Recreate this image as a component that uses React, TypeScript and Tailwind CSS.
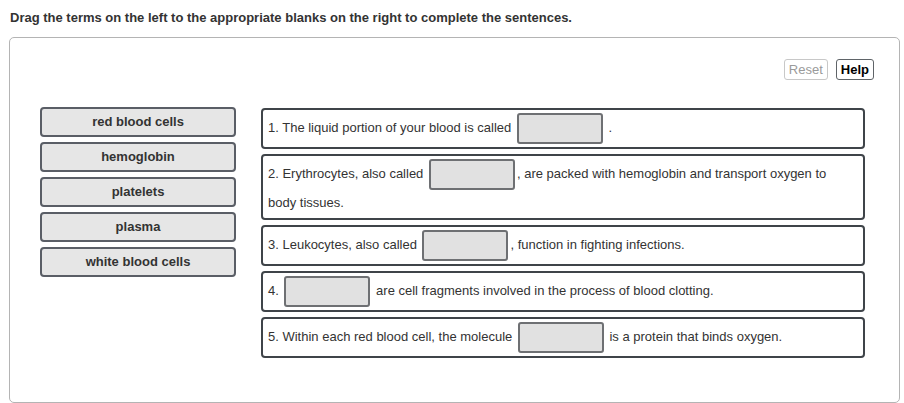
const terms = ["red blood cells", "hemoglobin", "platelets", "plasma", "white blood cells"];

const Blank = () => (
  <span className="inline-block align-middle w-[86px] h-[31px] mx-[2px] bg-[#e1e1e1] border-2 border-[#6e7073] rounded-[3px]" />
);

const Sentence = ({ children }: { children: React.ReactNode }) => (
  <div className="border-2 border-[#3f4449] rounded-[4px] px-[5px] py-[3px] leading-[25px] text-[13px] text-[#333]">
    {children}
  </div>
);

export default function App() {
  return (
    <div className="w-[904px] h-[403px] overflow-hidden bg-white font-['Liberation_Sans',Arial,sans-serif] text-[#333]">
      <h1 className="pt-[10px] pl-[10px] text-[13px] leading-[16px] font-bold">
        Drag the terms on the left to the appropriate blanks on the right to complete the sentences.
      </h1>

      <div className="mt-[11px] ml-[9px] w-[891px] h-[366px] border border-[#b4b4b4] rounded-[5px] pt-[21px]">
        <div className="flex justify-end gap-[8px] pr-[25px]">
          <button className="h-[21px] px-[4px] text-[13px] leading-[17px] text-[#9a9a9a] border border-[#c8c8c8] rounded-[3px] bg-white">
            Reset
          </button>
          <button className="h-[21px] px-[4px] text-[13px] leading-[17px] font-bold text-black border border-[#5f6468] rounded-[3px] bg-white">
            Help
          </button>
        </div>

        <div className="flex gap-[25px] pl-[30px] mt-[27px]">
          <div className="flex flex-col gap-[5px] w-[196px]">
            {terms.map((t) => (
              <div
                key={t}
                className="h-[30px] flex items-center justify-center pb-[1px] bg-[#e6e6e6] border-2 border-[#5a5e66] rounded-[4px] text-[13px] font-bold text-[#333]"
              >
                {t}
              </div>
            ))}
          </div>

          <div className="flex flex-col gap-[5px] w-[604px] mt-[1px]">
            <Sentence>
              1. The liquid portion of your blood is called <Blank /> .
            </Sentence>
            <Sentence>
              2. Erythrocytes, also called <Blank />, are packed with hemoglobin and transport oxygen to body tissues.
            </Sentence>
            <Sentence>
              3. Leukocytes, also called <Blank />, function in fighting infections.
            </Sentence>
            <Sentence>
              4. <Blank /> are cell fragments involved in the process of blood clotting.
            </Sentence>
            <Sentence>
              5. Within each red blood cell, the molecule <Blank /> is a protein that binds oxygen.
            </Sentence>
          </div>
        </div>
      </div>
    </div>
  );
}
